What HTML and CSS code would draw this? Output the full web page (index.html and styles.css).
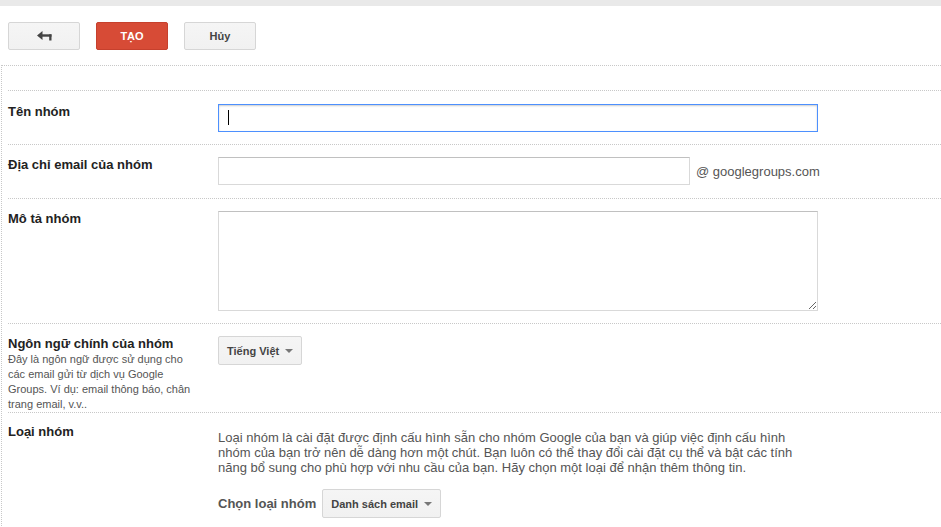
FILE: index.html
```html
<!DOCTYPE html>
<html lang="vi">
<head>
<meta charset="utf-8">
<title>Tạo nhóm</title>
<link rel="stylesheet" href="styles.css">
</head>
<body>
<div class="topbar"></div>
<div class="toolbar">
  <button class="btn btn-grey btn-wide" type="button" aria-label="Quay lại">
    <svg class="back-icon" width="15" height="10" viewBox="0 0 15 10"><polygon points="0,4.5 5.5,0 5.5,9" fill="#444"/><rect x="5" y="3.3" width="9.5" height="2.4" fill="#444"/><rect x="12.2" y="3.3" width="2.3" height="6.2" fill="#444"/></svg>
  </button>
  <button class="btn btn-red btn-wide" type="button">TẠO</button>
  <button class="btn btn-grey btn-wide" type="button">Hủy</button>
</div>
<div class="form">
  <div class="row row-first">
    <div class="label-col"><div class="label">Tên nhóm</div></div>
    <div class="field-col">
      <div class="focus-wrap">
        <input class="text-input input-full focused" type="text">
        <span class="caret"></span>
      </div>
    </div>
  </div>
  <div class="row">
    <div class="label-col"><div class="label">Địa chỉ email của nhóm</div></div>
    <div class="field-col inline">
      <input class="text-input input-email" type="text">
      <span class="domain">@ googlegroups.com</span>
    </div>
  </div>
  <div class="row row-desc">
    <div class="label-col"><div class="label">Mô tả nhóm</div></div>
    <div class="field-col">
      <textarea class="text-area"></textarea>
    </div>
  </div>
  <div class="row row-lang">
    <div class="label-col">
      <div class="label">Ngôn ngữ chính của nhóm</div>
      <div class="desc">Đây là ngôn ngữ được sử dụng cho các email gửi từ dịch vụ Google Groups. Ví dụ: email thông báo, chân trang email, v.v..</div>
    </div>
    <div class="field-col">
      <button class="btn btn-grey btn-menu" type="button">Tiếng Việt <span class="arrow"></span></button>
    </div>
  </div>
  <div class="row row-type">
    <div class="label-col"><div class="label">Loại nhóm</div></div>
    <div class="field-col">
      <p class="para">Loại nhóm là cài đặt được định cấu hình sẵn cho nhóm Google của bạn và giúp việc định cấu hình nhóm của bạn trở nên dễ dàng hơn một chút. Bạn luôn có thể thay đổi cài đặt cụ thể và bật các tính năng bổ sung cho phù hợp với nhu cầu của bạn. Hãy chọn một loại để nhận thêm thông tin.</p>
      <div class="choose">
        <span class="choose-label">Chọn loại nhóm</span>
        <button class="btn btn-grey btn-menu" type="button">Danh sách email <span class="arrow"></span></button>
      </div>
    </div>
  </div>
</div>
</body>
</html>
```

FILE: styles.css
```css
html, body {
  margin: 0;
  padding: 0;
  background: #fff;
  font-family: "Liberation Sans", Arial, sans-serif;
  font-size: 13px;
  color: #222;
  overflow: hidden;
}

.topbar {
  height: 6px;
  background: #e9e9e9;
}

.toolbar {
  display: flex;
  gap: 16px;
  padding: 16px 8px 15px;
}

.btn {
  box-sizing: border-box;
  height: 28px;
  border-radius: 2px;
  font-family: "Liberation Sans", Arial, sans-serif;
  font-size: 11px;
  font-weight: bold;
  display: inline-flex;
  align-items: center;
  justify-content: center;
  padding: 0 8px;
  cursor: default;
}

.btn-wide {
  width: 72px;
}

.btn-grey {
  background: linear-gradient(#f5f5f5, #f1f1f1);
  border: 1px solid #d6d6d6;
  color: #444;
}

.btn-red {
  background: #d74b36;
  border: 1px solid #c6402d;
  color: #fff;
}

.back-icon {
  display: block;
}

.btn-menu {
  height: 29px;
  gap: 6px;
}

.arrow {
  width: 0;
  height: 0;
  border-left: 4px solid transparent;
  border-right: 4px solid transparent;
  border-top: 4px solid #777;
  margin-top: 1px;
}

.form {
  margin-left: 1px;
  border-top: 1px dotted #c8c8c8;
  border-left: 1px dotted #c8c8c8;
  padding: 24px 0 0 6px;
}

.row {
  display: flex;
  border-top: 1px dotted #c8c8c8;
  padding: 12px 0 13px;
}

.row-first {
  padding: 13px 0 12px;
}

.row-desc {
  padding: 12px 0 12px;
}

.row-lang {
  padding: 12px 0 0;
}

.row-type {
  padding: 11px 0 20px;
}

.label-col {
  width: 190px;
  margin-right: 20px;
  flex: none;
}

.label {
  font-weight: bold;
  font-size: 13px;
  line-height: 16px;
  color: #222;
}

.row-lang .label {
  line-height: 16px;
}

.desc {
  font-size: 11px;
  line-height: 15px;
  color: #555;
  width: 186px;
}

.field-col {
  flex: none;
}

.inline {
  display: flex;
  align-items: center;
  gap: 6px;
}

.text-input {
  box-sizing: border-box;
  height: 28px;
  border: 1px solid #d9d9d9;
  border-top-color: #c0c0c0;
  padding: 0 8px;
  font-family: "Liberation Sans", Arial, sans-serif;
  font-size: 13px;
  outline: none;
  margin: 0;
  display: block;
}

.input-full {
  width: 600px;
}

.focused {
  border: 1px solid #4d90fe;
  box-shadow: inset 0 1px 2px rgba(0,0,0,0.2);
}

.focus-wrap {
  position: relative;
}

.caret {
  position: absolute;
  left: 10px;
  top: 6px;
  width: 1px;
  height: 15px;
  background: #000;
}

.input-email {
  width: 472px;
}

.domain {
  color: #555;
  font-size: 13px;
}

.text-area {
  box-sizing: border-box;
  width: 600px;
  height: 100px;
  border: 1px solid #d9d9d9;
  border-top-color: #c0c0c0;
  margin: 0;
  display: block;
  font-family: "Liberation Sans", Arial, sans-serif;
  font-size: 13px;
  outline: none;
}

.para {
  margin: 6px 0 0;
  width: 590px;
  font-size: 13px;
  line-height: 15px;
  color: #555;
}

.choose {
  display: flex;
  align-items: center;
  gap: 6px;
  margin-top: 14px;
}

.choose-label {
  font-weight: bold;
  font-size: 13px;
  color: #555;
}
```
